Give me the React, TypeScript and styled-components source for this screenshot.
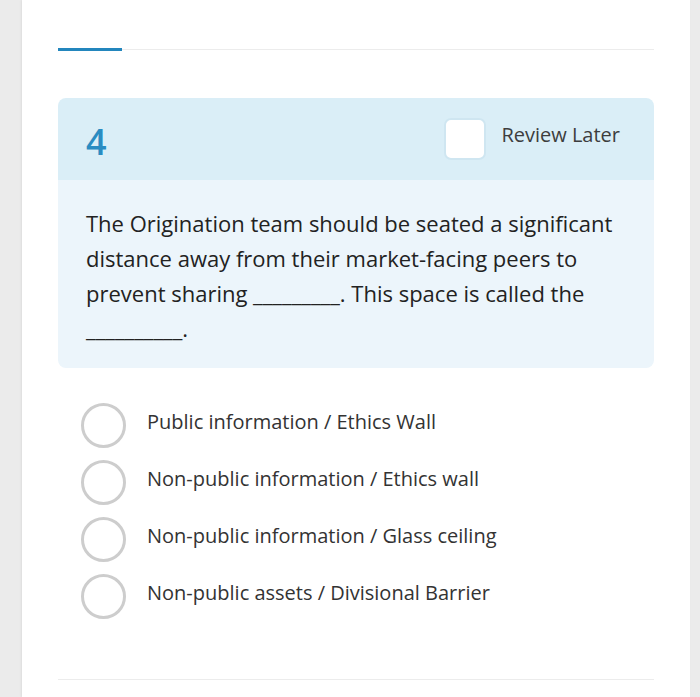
import styled, { createGlobalStyle } from "styled-components";

const GlobalStyle = createGlobalStyle`
  html, body {
    margin: 0;
    padding: 0;
    background: #ebebeb;
  }
  body {
    font-family: "Open Sans", "Noto Sans", sans-serif;
  }
`;

const options = [
  "Public information / Ethics Wall",
  "Non-public information / Ethics wall",
  "Non-public information / Glass ceiling",
  "Non-public assets / Divisional Barrier",
];

const App = () => {
  return (
    <>
      <GlobalStyle />
      <Page>
        <Progress>
          <ProgressDone />
          <ProgressTrack />
        </Progress>

        <Card>
          <CardHeader>
            <QuestionNumber>4</QuestionNumber>
            <ReviewLabel>
              <ReviewBox />
              <span>Review Later</span>
            </ReviewLabel>
          </CardHeader>
          <CardBody>
            The Origination team should be seated a significant distance away
            from their market-facing peers to prevent sharing _________. This
            space is called the __________.
          </CardBody>
        </Card>

        <OptionList>
          {options.map((text) => (
            <OptionRow key={text}>
              <Radio />
              <OptionText>{text}</OptionText>
            </OptionRow>
          ))}
        </OptionList>

        <Divider />
      </Page>
    </>
  );
};

const Page = styled.div`
  box-sizing: border-box;
  margin-left: 22px;
  width: 668px;
  height: 697px;
  background: #ffffff;
  padding: 48px 36px 0 36px;
  display: flex;
  flex-direction: column;
  box-shadow: -1px 0 2px rgba(0, 0, 0, 0.06);
`;

const Progress = styled.div`
  display: flex;
  align-items: center;
  height: 3px;
`;

const ProgressDone = styled.div`
  width: 64px;
  height: 3px;
  background: #2386bd;
`;

const ProgressTrack = styled.div`
  flex: 1;
  height: 1px;
  background: #ececec;
`;

const Card = styled.div`
  margin-top: 47px;
  border-radius: 8px;
  overflow: hidden;
`;

const CardHeader = styled.div`
  height: 82px;
  box-sizing: border-box;
  padding: 0 34px 0 28px;
  background: #daeef7;
  display: flex;
  align-items: center;
  justify-content: space-between;
`;

const QuestionNumber = styled.div`
  font-size: 36px;
  font-weight: 600;
  color: #2a8cc2;
  line-height: 1;
  margin-top: 6px;
`;

const ReviewLabel = styled.label`
  display: flex;
  align-items: center;
  gap: 15px;
  font-size: 20px;
  color: #3d3d3d;
  span {
    margin-top: -9px;
  }
`;

const ReviewBox = styled.div`
  width: 42px;
  height: 42px;
  box-sizing: border-box;
  background: #ffffff;
  border: 2px solid #cfe6f1;
  border-radius: 7px;
`;

const CardBody = styled.div`
  background: #ecf5fb;
  padding: 26px 36px 14px 28px;
  min-height: 188px;
  box-sizing: border-box;
  font-size: 22px;
  line-height: 35px;
  color: #222222;
`;

const OptionList = styled.div`
  margin-top: 35px;
  padding-left: 23px;
  display: flex;
  flex-direction: column;
  gap: 12px;
`;

const OptionRow = styled.div`
  display: flex;
  align-items: center;
  gap: 21px;
`;

const Radio = styled.div`
  width: 45px;
  height: 45px;
  box-sizing: border-box;
  border: 3px solid #cdcdcd;
  border-radius: 50%;
  flex-shrink: 0;
`;

const OptionText = styled.span`
  font-size: 20px;
  color: #333333;
  margin-top: -9px;
`;

const Divider = styled.div`
  margin-top: 60px;
  height: 1px;
  background: #ececec;
`;

export default App;
